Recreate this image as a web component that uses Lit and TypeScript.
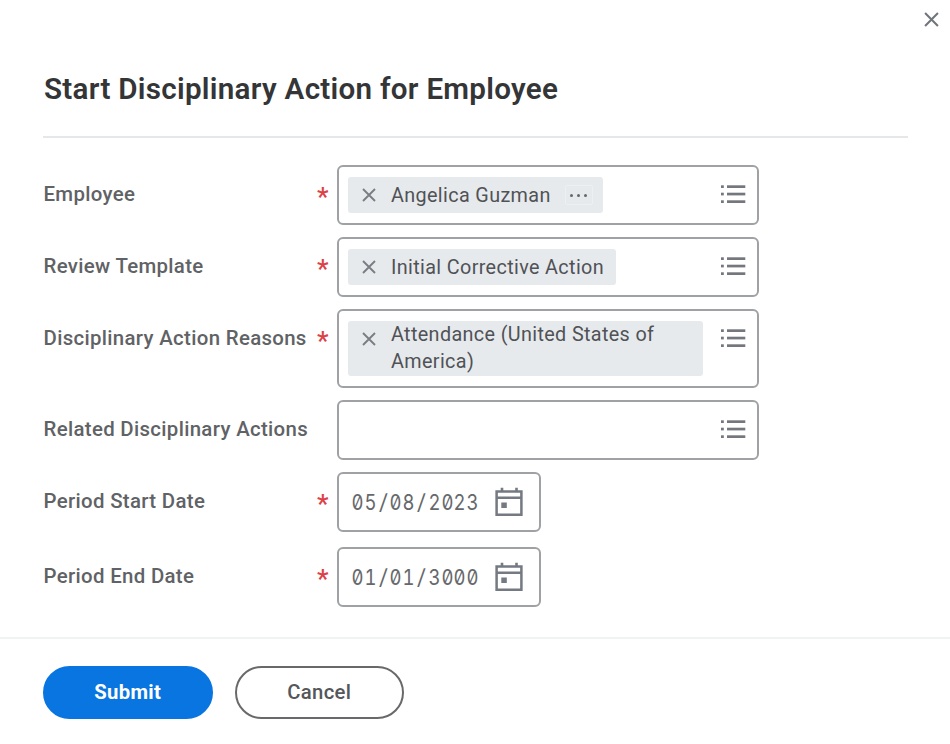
import { LitElement, html, css, svg, nothing } from "lit";
import { customElement, property } from "lit/decorators.js";

interface Field {
  label: string;
  required: boolean;
  kind: "prompt" | "date";
  value: string;
  menu?: boolean;
}

const FIELDS: Field[] = [
  { label: "Employee", required: true, kind: "prompt", value: "Angelica Guzman", menu: true },
  { label: "Review Template", required: true, kind: "prompt", value: "Initial Corrective Action" },
  { label: "Disciplinary Action Reasons", required: true, kind: "prompt", value: "Attendance (United States of America)" },
  { label: "Related Disciplinary Actions", required: false, kind: "prompt", value: "" },
  { label: "Period Start Date", required: true, kind: "date", value: "05/08/2023" },
  { label: "Period End Date", required: true, kind: "date", value: "01/01/3000" },
];

const cross = svg`<path d="M1 1 L13 13 M13 1 L1 13" fill="none" stroke="currentColor" stroke-width="1.9"/>`;

@customElement("prompt-field")
class PromptField extends LitElement {
  @property() value = "";
  @property({ type: Boolean }) menu = false;

  static styles = css`
    :host { display: block; }
    .box {
      box-sizing: border-box; width: 422px; min-height: 60px; padding: 10px 9px;
      border: 2px solid #9fa1a4; border-radius: 6px; background: #fff;
      display: flex; justify-content: space-between; align-items: flex-start;
    }
    .pill {
      box-sizing: border-box; display: flex; align-items: flex-start; min-height: 36px; max-width: 355px;
      padding: 0 12px 0 14px; background: #e7eaed; border-radius: 3px; color: #505256;
      font-size: 19.8px; letter-spacing: 0.36px; line-height: 27px;
    }
    .remove { width: 14px; height: 14px; flex: none; margin: 11px 15px 0 0; color: #7a7e83; }
    .text { padding-top: 5px; }
    .pill.tall .text { padding: 0 0 1px; }
    .pill.single .text { white-space: nowrap; }
    .more {
      box-sizing: border-box; display: flex; align-items: center; justify-content: center; gap: 4px;
      width: 28px; height: 20px; margin: 8px -3px 0 14px; border: 1px solid #edf0f2; border-radius: 2px;
    }
    .pill.single:has(.more) { padding-right: 13px; }
    .more i { width: 3px; height: 3px; border-radius: 50%; background: #63676c; }
    .list { width: 26px; height: 20px; flex: none; margin: 7px 2px 0 auto; color: #74777d; }
  `;

  render() {
    const tall = this.value.length > 28;
    return html`<div class="box">
      ${this.value
        ? html`<div class="pill ${tall ? "tall" : "single"}">
            <svg class="remove" viewBox="0 0 14 14">${cross}</svg>
            <span class="text">${this.value}</span>
            ${this.menu ? html`<span class="more"><i></i><i></i><i></i></span>` : nothing}
          </div>`
        : nothing}
      <svg class="list" viewBox="0 0 26 20" fill="currentColor">
        ${[1.3, 8.7, 16.3].map((y) => svg`<rect x="1" y=${y} width="2.8" height="2.7"/><rect x="7" y=${y} width="18.3" height="2.7"/>`)}
      </svg>
    </div>`;
  }
}

@customElement("date-field")
class DateField extends LitElement {
  @property() value = "";

  static styles = css`
    :host { display: block; }
    .box {
      box-sizing: border-box; width: 204px; height: 60px; padding: 0 16px 1px 12px;
      border: 2px solid #9fa1a4; border-radius: 6px; background: #fff;
      display: flex; justify-content: space-between; align-items: center;
    }
    .date {
      font: 400 21.5px "Inter", "Roboto", sans-serif; font-feature-settings: "zero", "tnum";
      color: #66686b; display: flex;
    }
    .glyph { width: 12.8px; display: flex; justify-content: center; }
    .digit { transform: scaleX(0.86); }
    .slash { transform: scaleX(1.3); font-weight: 300; }
    .calendar { width: 28px; height: 30px; color: #747982; }
  `;

  render() {
    return html`<div class="box">
      <span class="date">${[...this.value].map((c) => html`<span class="glyph ${c === "/" ? "slash" : "digit"}">${c}</span>`)}</span>
      <svg class="calendar" viewBox="0 0 28 30" fill="none" stroke="currentColor">
        <path d="M1.6 4.6 H26.4 V27.7 H1.6 Z M1.6 10.7 H26.4" stroke-width="2.5"/>
        <path d="M7 .7 V4.5 M21.5 .7 V4.5" stroke-width="2.6"/>
        <rect x="6.3" y="15.5" width="5.5" height="5.5" fill="currentColor" stroke="none"/>
      </svg>
    </div>`;
  }
}

@customElement("app-root")
class AppRoot extends LitElement {
  static styles = css`
    :host { display: block; font-family: "Roboto", "Liberation Sans", sans-serif; }
    .dialog {
      box-sizing: border-box; height: 744px; background: #fff; overflow: hidden;
      display: flex; flex-direction: column;
    }
    .top { display: flex; justify-content: flex-end; height: 66px; padding: 12px 11px 0 0; box-sizing: border-box; }
    .close { width: 15px; height: 15px; color: #70757b; }
    .title {
      margin: 0 42px 0 43px; height: 72px; box-sizing: border-box; border-bottom: 2px solid #e6e7e8;
      font-size: 29.6px; font-weight: 600; line-height: 46px; color: #343537; white-space: nowrap;
      text-indent: 1px; letter-spacing: 0.28px;
    }
    .form { margin: 27px 0 0 43px; display: flex; flex-direction: column; gap: 12px; flex: 1; }
    .row { display: grid; grid-template-columns: 274px 20px 422px; }
    .row.end { margin-top: 3px; }
    .label {
      font-size: 20.4px; font-weight: 500; line-height: 59px; height: 58px; color: #606265;
      white-space: nowrap; text-indent: 0.5px; letter-spacing: 0.33px;
    }
    .star { font-size: 26px; font-weight: 500; line-height: 64px; height: 50px; color: #dc4148; }
    .footer { height: 107px; box-sizing: border-box; border-top: 2px solid #f1f2f2; padding: 27px 43px; display: flex; gap: 22px; }
    .button {
      box-sizing: border-box; width: 169.5px; height: 53px; border-radius: 27px; padding: 0 0 1px;
      border: 2px solid #69696b; background: #fff; color: #55575a; font: 500 20.3px "Roboto", sans-serif; letter-spacing: .3px;
    }
    .primary { background: #0875e1; border-color: #0875e1; color: #fff; font-weight: 700; }
  `;

  render() {
    return html`<div class="dialog">
      <div class="top"><svg class="close" viewBox="0 0 14 14">${cross}</svg></div>
      <div class="title">Start Disciplinary Action for Employee</div>
      <div class="form">
        ${FIELDS.map((f, i) => html`<div class="row ${i === FIELDS.length - 1 ? "end" : ""}">
          <span class="label">${f.label}</span>
          <span class="star">${f.required ? "*" : nothing}</span>
          ${f.kind === "date"
            ? html`<date-field .value=${f.value}></date-field>`
            : html`<prompt-field .value=${f.value} ?menu=${f.menu}></prompt-field>`}
        </div>`)}
      </div>
      <div class="footer">
        <button class="button primary">Submit</button>
        <button class="button">Cancel</button>
      </div>
    </div>`;
  }
}
